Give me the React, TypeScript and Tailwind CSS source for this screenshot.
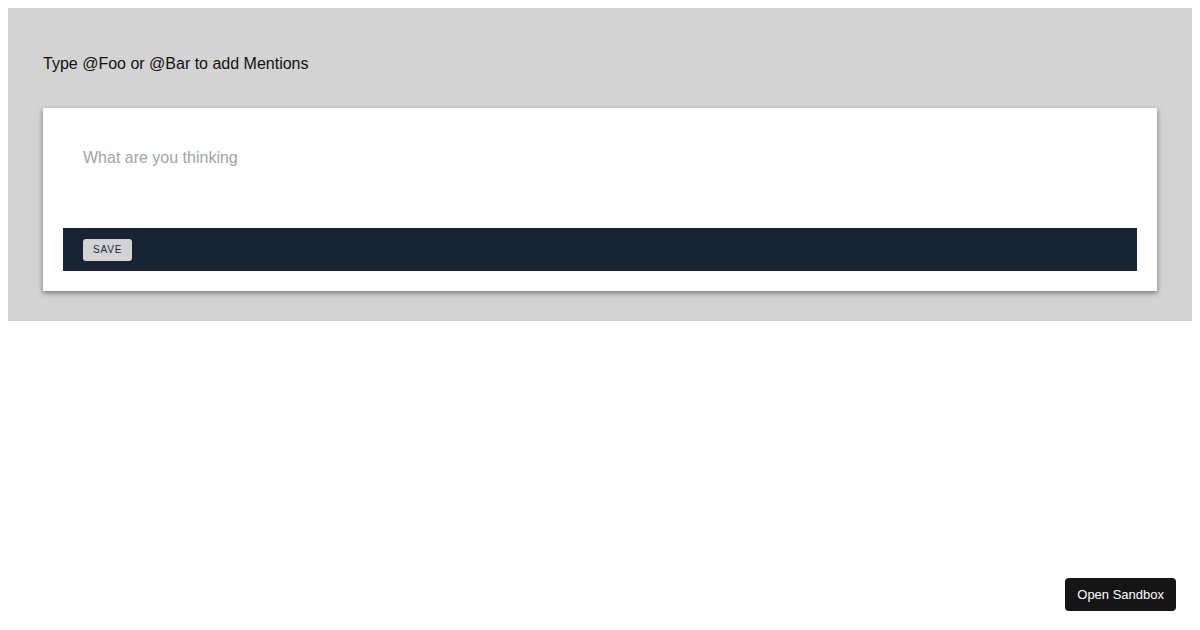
import React from "react";

const App = () => {
  return (
    <div className="min-h-[630px] bg-white p-2 font-['Liberation_Sans',Arial,sans-serif]">
      <div className="bg-[#d3d3d3] px-[35px] pt-[47px] pb-[30px]">
        <p className="text-[16px] leading-[18px] text-[#111]">Type @Foo or @Bar to add Mentions</p>

        {/* Editor card */}
        <div className="mt-[35px] bg-white p-5 shadow-[0_2px_5px_rgba(0,0,0,0.45)]">
          <div className="h-[100px] px-5 pt-[18px]">
            <span className="text-[16px] leading-[18px] text-[#9ea5a5]">What are you thinking</span>
          </div>
          <div className="flex h-[43px] items-center bg-[#182334] px-5">
            <button className="h-[22px] rounded-[3px] bg-[#d3d3d3] px-[10px] text-[10px] tracking-[0.8px] text-[#1d2a3d]">
              SAVE
            </button>
          </div>
        </div>
      </div>

      <button className="fixed right-[24px] bottom-[19px] h-[33px] rounded-[4px] bg-[#151515] px-[12px] text-[13px] text-white font-['Liberation_Sans',Arial,sans-serif]">
        Open Sandbox
      </button>
    </div>
  );
};

export default App;
